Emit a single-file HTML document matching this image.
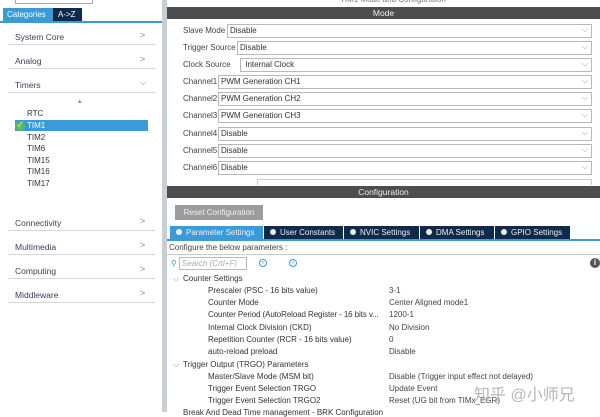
<!DOCTYPE html>
<html><head><meta charset="utf-8"><style>
*{margin:0;padding:0;box-sizing:border-box}
body{width:600px;height:412px;overflow:hidden;position:relative;background:#fff;font-family:"Liberation Sans","Noto Sans CJK SC",sans-serif;font-size:8px;color:#333}
.a{position:absolute;white-space:nowrap}
.hl{position:absolute;height:1px;background:#d5d8dc;left:8px;width:147px}
.cat{position:absolute;left:15px;font-size:8.5px;color:#3a3f5a}
.chev{position:absolute;left:140px;color:#888;font-size:9px}
.bar{position:absolute;left:167px;width:433px;height:12px;background:#4b4d4e;color:#eee;text-align:center;font-size:8.5px;line-height:12px}
.lab{position:absolute;left:183px;color:#444;font-size:8px}
.sel{position:absolute;right:8px;height:14px;border:1px solid #b8b8b8;background:#fff;padding-left:2px;line-height:12px;color:#333}
.sel:after{content:"⌵";position:absolute;right:3px;top:-1px;color:#999;font-size:8px}
.tab{position:absolute;top:226px;height:13px;background:#0f2a4a;color:#eee;line-height:13px;padding-left:6px;font-size:8px}
.dot{display:inline-block;width:6px;height:6px;border-radius:50%;background:#eee;margin-right:4px;vertical-align:0}
.p{position:absolute;left:208px;color:#333}
.v{position:absolute;left:389px;color:#444}
</style></head><body>
<div class="a" style="left:0;top:0;width:162px;height:412px;background:#fff"></div>
<div class="a" style="left:162px;top:0;width:5px;height:412px;background:#c9ced3"></div>
<div class="a" style="left:15px;top:-4px;width:78px;height:8px;border:1px solid #aaa"></div>
<div class="a" style="left:3px;top:8px;width:50px;height:13px;background:#3b9bd8;color:#fff;line-height:13px;padding-left:4px">Categories</div>
<div class="a" style="left:53px;top:8px;width:29px;height:13px;background:#0f2a4a;color:#fff;line-height:13px;padding-left:5px">A-&gt;Z</div>
<div class="a" style="left:0;top:21px;width:162px;height:2px;background:#3b9bd8"></div>
<div class="cat" style="top:32px">System Core</div><div class="chev" style="top:30px">&gt;</div><div class="hl" style="top:44px"></div>
<div class="cat" style="top:56px">Analog</div><div class="chev" style="top:54px">&gt;</div><div class="hl" style="top:68px"></div>
<div class="cat" style="top:80px">Timers</div><div class="chev" style="top:78px;font-size:8px">⌵</div><div class="hl" style="top:92px"></div>
<div class="a" style="left:78px;top:97px;color:#888;font-size:7px">▴</div>
<div class="a" style="left:27px;top:109px">RTC</div>
<div class="a" style="left:15px;top:120px;width:133px;height:11px;background:#3b9bd8"></div>
<div class="a" style="left:15px;top:121px;width:10px;height:10px;border-radius:50%;background:#5cb85c;color:#fff;font-size:7px;line-height:10px;text-align:center">✓</div>
<div class="a" style="left:27px;top:121px;color:#fff">TIM1</div>
<div class="a" style="left:27px;top:133px">TIM2</div>
<div class="a" style="left:27px;top:144px">TIM6</div>
<div class="a" style="left:27px;top:156px">TIM15</div>
<div class="a" style="left:27px;top:167px">TIM16</div>
<div class="a" style="left:27px;top:179px">TIM17</div>
<div class="cat" style="top:218px">Connectivity</div><div class="chev" style="top:216px">&gt;</div><div class="hl" style="top:230px"></div>
<div class="cat" style="top:242px">Multimedia</div><div class="chev" style="top:240px">&gt;</div><div class="hl" style="top:254px"></div>
<div class="cat" style="top:266px">Computing</div><div class="chev" style="top:264px">&gt;</div><div class="hl" style="top:278px"></div>
<div class="cat" style="top:290px">Middleware</div><div class="chev" style="top:288px">&gt;</div><div class="hl" style="top:302px"></div>

<div class="a" style="left:340px;top:-5px;color:#777">TIM1 Mode and Configuration</div>
<div class="bar" style="top:7px">Mode</div>
<div class="lab" style="top:26px">Slave Mode</div><div class="sel" style="left:227px;top:24px">Disable</div>
<div class="lab" style="top:43px">Trigger Source</div><div class="sel" style="left:237px;top:41px">Disable</div>
<div class="lab" style="top:60px">Clock Source</div><div class="sel" style="left:240px;top:58px">&nbsp;Internal Clock</div>
<div class="lab" style="top:77px">Channel1</div><div class="sel" style="left:218px;top:75px">PWM Generation CH1</div>
<div class="lab" style="top:94px">Channel2</div><div class="sel" style="left:218px;top:92px">PWM Generation CH2</div>
<div class="lab" style="top:111px">Channel3</div><div class="sel" style="left:218px;top:109px">PWM Generation CH3</div>
<div class="lab" style="top:129px">Channel4</div><div class="sel" style="left:218px;top:127px">Disable</div>
<div class="lab" style="top:146px">Channel5</div><div class="sel" style="left:218px;top:144px">Disable</div>
<div class="lab" style="top:163px">Channel6</div><div class="sel" style="left:218px;top:161px">Disable</div>
<div class="a" style="left:257px;top:179px;width:335px;height:6px;border:1px solid #ccc;border-bottom:none"></div>
<div class="bar" style="top:186px">Configuration</div>
<div class="a" style="left:175px;top:205px;width:88px;height:15px;background:#9c9c9c;color:#eee;line-height:15px;text-align:center">Reset Configuration</div>
<div class="tab" style="left:170px;width:93px;background:#3b9bd8"><span class="dot"></span>Parameter Settings</div>
<div class="tab" style="left:264px;width:79px"><span class="dot"></span>User Constants</div>
<div class="tab" style="left:344px;width:75px"><span class="dot"></span>NVIC Settings</div>
<div class="tab" style="left:420px;width:74px"><span class="dot"></span>DMA Settings</div>
<div class="tab" style="left:495px;width:75px"><span class="dot"></span>GPIO Settings</div>
<div class="a" style="left:167px;top:239px;width:433px;height:2px;background:#3b9bd8"></div>
<div class="a" style="left:169px;top:243px;color:#444">Configure the below parameters :</div>
<div class="a" style="left:167px;top:254px;width:433px;height:1px;background:#ccc"></div>
<div class="a" style="left:171px;top:259px;color:#3b9bd8">⚲</div>
<div class="a" style="left:179px;top:257px;width:68px;height:13px;border:1px solid #bbb;color:#aaa;font-style:italic;padding-left:2px;line-height:11px">Search (Crtl+F)</div>
<div class="a" style="left:259px;top:259px;width:8px;height:8px;border:1px solid #3b9bd8;border-radius:50%;font-size:5px;color:#3b9bd8;text-align:center;line-height:7px">&lt;</div>
<div class="a" style="left:289px;top:259px;width:8px;height:8px;border:1px solid #3b9bd8;border-radius:50%;font-size:5px;color:#3b9bd8;text-align:center;line-height:7px">&gt;</div>
<div class="a" style="left:590px;top:258px;width:10px;height:10px;border-radius:50%;background:#555;color:#fff;font-size:8px;text-align:center;line-height:10px;font-weight:bold">i</div>
<div class="a" style="left:173px;top:274px;color:#888">⌵</div><div class="a" style="left:183px;top:274px">Counter Settings</div>
<div class="p" style="top:286px">Prescaler (PSC - 16 bits value)</div><div class="v" style="top:286px">3-1</div>
<div class="p" style="top:298px">Counter Mode</div><div class="v" style="top:298px">Center Aligned mode1</div>
<div class="p" style="top:310px;letter-spacing:-0.1px">Counter Period (AutoReload Register - 16 bits v...</div><div class="v" style="top:310px">1200-1</div>
<div class="p" style="top:323px">Internal Clock Division (CKD)</div><div class="v" style="top:323px">No Division</div>
<div class="p" style="top:335px">Repetition Counter (RCR - 16 bits value)</div><div class="v" style="top:335px">0</div>
<div class="p" style="top:347px">auto-reload preload</div><div class="v" style="top:347px">Disable</div>
<div class="a" style="left:173px;top:360px;color:#888">⌵</div><div class="a" style="left:183px;top:360px">Trigger Output (TRGO) Parameters</div>
<div class="p" style="top:372px">Master/Slave Mode (MSM bit)</div><div class="v" style="top:372px">Disable (Trigger input effect not delayed)</div>
<div class="p" style="top:384px">Trigger Event Selection TRGO</div><div class="v" style="top:384px">Update Event</div>
<div class="p" style="top:396px">Trigger Event Selection TRGO2</div><div class="v" style="top:396px">Reset (UG bit from TIMx_EGR)</div>
<div class="a" style="left:183px;top:408px">Break And Dead Time management - BRK Configuration</div>
<div class="a" style="left:474px;top:381px;font-size:16px;color:rgba(170,170,170,0.85)">知乎 @小师兄</div>
</body></html>
